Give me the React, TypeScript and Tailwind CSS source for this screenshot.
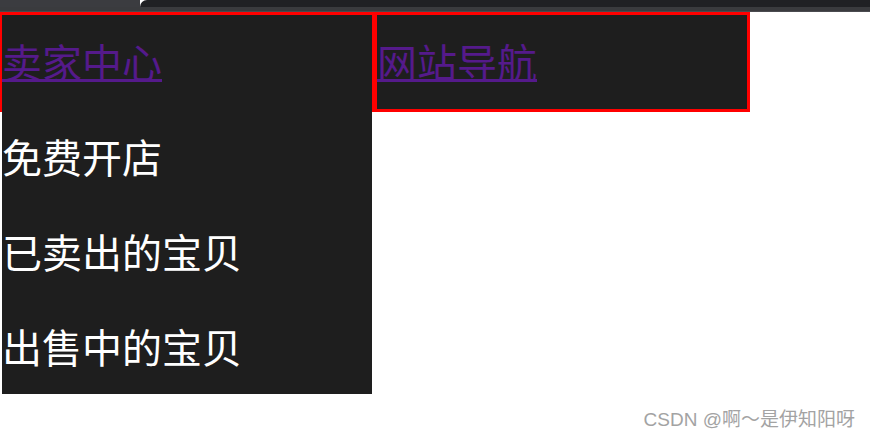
const navItems = [
  {
    label: "卖家中心",
    children: ["免费开店", "已卖出的宝贝", "出售中的宝贝"],
  },
  { label: "网站导航", children: [] as string[] },
];

export default function App() {
  return (
    <div
      className="relative w-[870px] h-[439px] bg-white overflow-hidden"
      style={{ fontFamily: '"Noto Sans CJK SC", "Noto Sans", sans-serif' }}
    >
      {/* browser tab strip */}
      <div className="flex h-[7px]">
        <div className="w-[140px] bg-[#3b3c40]" />
        <div className="flex-1 bg-[#202124] rounded-tl-[8px]" />
      </div>
      <div className="h-[5px] bg-[#3a3b3e] border-b border-[#4a4b4f]" />

      {/* nav */}
      <ul className="flex">
        {navItems.map((item) => (
          <li
            key={item.label}
            className="relative w-[375px] h-[100px] bg-[#1e1e1e] border-y-[3px] border-l-2 border-r-[3px] border-[#ff0000]"
          >
            <a
              href="#"
              className="block leading-[92px] text-[40px] text-[#551a8b] underline decoration-[3px] underline-offset-[1px]"
            >
              {item.label}
            </a>
            {item.children.length > 0 && (
              <ul className="absolute left-0 top-full w-[370px] bg-[#1e1e1e]">
                {item.children.map((c) => (
                  <li key={c} className="h-[95px] leading-[95px] text-[40px] text-white">
                    {c}
                  </li>
                ))}
              </ul>
            )}
          </li>
        ))}
      </ul>

      {/* watermark */}
      <div
        className="absolute top-[410px] right-[15px] text-[19px] leading-[19px] text-[#a3a3a3] whitespace-nowrap"
        style={{ fontFamily: '"Liberation Sans", "Noto Sans CJK SC", sans-serif' }}
      >
        CSDN @啊～是伊知阳呀
      </div>
    </div>
  );
}
